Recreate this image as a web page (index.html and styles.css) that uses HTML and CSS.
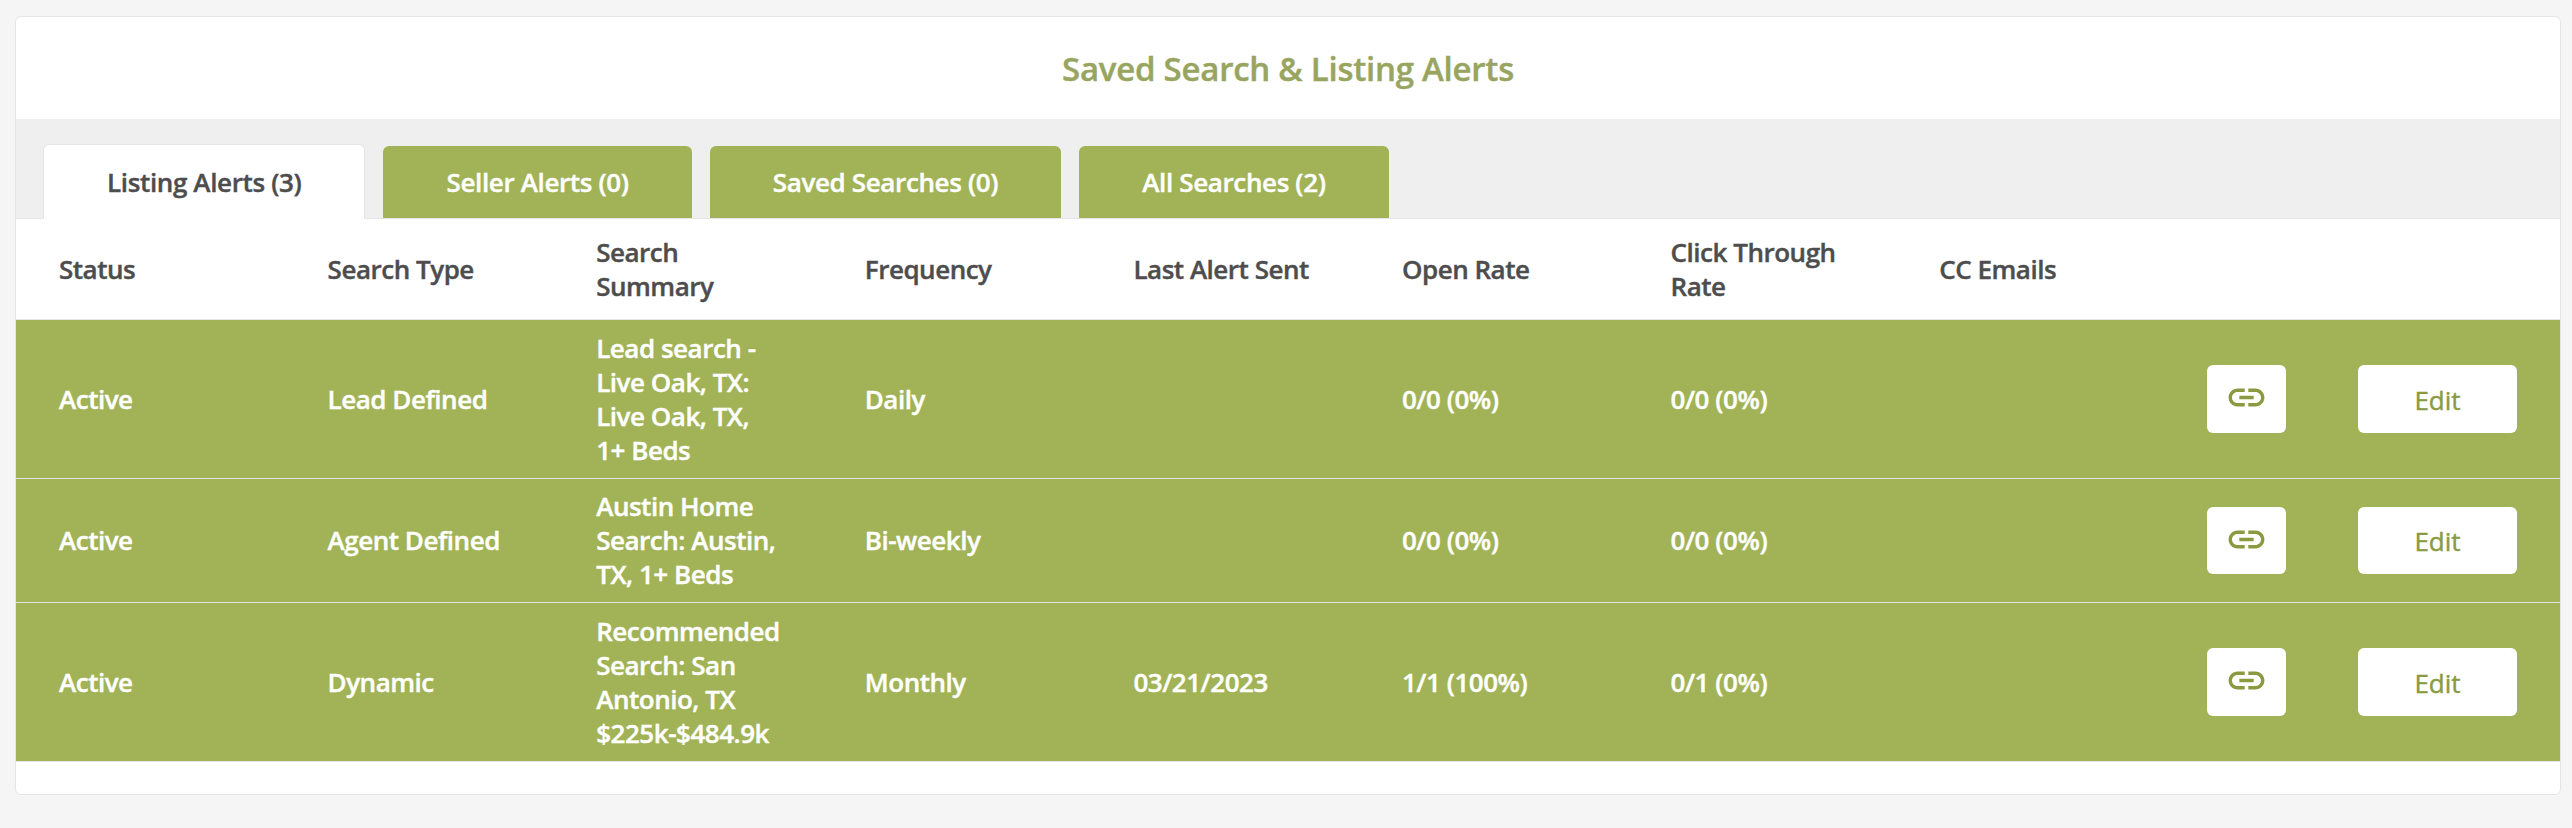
FILE: index.html
```html
<!DOCTYPE html>
<html lang="en">
<head>
    <title>Saved Search &amp; Listing Alerts</title>
    <meta charset="UTF-8">
    <link rel="stylesheet" href="styles.css">
</head>
<body>
    <!-- shared link icon -->
    <svg class="icon-defs" width="0" height="0">
        <symbol id="icon-link" viewBox="0 0 24 24">
            <path d="M3.9 12c0-1.71 1.39-3.1 3.1-3.1h4V7H7c-2.76 0-5 2.24-5 5s2.24 5 5 5h4v-1.9H7c-1.71 0-3.1-1.39-3.1-3.1zM8 13h8v-2H8v2zm9-6h-4v1.9h4c1.71 0 3.1 1.39 3.1 3.1s-1.39 3.1-3.1 3.1h-4V17h4c2.76 0 5-2.24 5-5s-2.24-5-5-5z"/>
        </symbol>
    </svg>

    <div class="card">
        <h2 class="card-title">Saved Search &amp; Listing Alerts</h2>

        <div class="tabs">
            <div class="tab active">Listing Alerts (3)</div>
            <div class="tab">Seller Alerts (0)</div>
            <div class="tab">Saved Searches (0)</div>
            <div class="tab">All Searches (2)</div>
        </div>

        <div class="row row-header">
            <div class="cell">Status</div>
            <div class="cell">Search Type</div>
            <div class="cell">Search Summary</div>
            <div class="cell">Frequency</div>
            <div class="cell">Last Alert Sent</div>
            <div class="cell">Open Rate</div>
            <div class="cell">Click Through Rate</div>
            <div class="cell">CC Emails</div>
            <div class="actions"></div>
        </div>

        <div class="row row-tall">
            <div class="cell">Active</div>
            <div class="cell">Lead Defined</div>
            <div class="cell">Lead search - Live Oak, TX: Live Oak, TX, 1+ Beds</div>
            <div class="cell">Daily</div>
            <div class="cell"></div>
            <div class="cell">0/0 (0%)</div>
            <div class="cell">0/0 (0%)</div>
            <div class="cell"></div>
            <div class="actions">
                <button class="btn btn-link"><svg class="icon"><use href="#icon-link"/></svg></button>
                <button class="btn btn-edit">Edit</button>
            </div>
        </div>

        <div class="row row-short">
            <div class="cell">Active</div>
            <div class="cell">Agent Defined</div>
            <div class="cell">Austin Home Search: Austin, TX, 1+ Beds</div>
            <div class="cell">Bi-weekly</div>
            <div class="cell"></div>
            <div class="cell">0/0 (0%)</div>
            <div class="cell">0/0 (0%)</div>
            <div class="cell"></div>
            <div class="actions">
                <button class="btn btn-link"><svg class="icon"><use href="#icon-link"/></svg></button>
                <button class="btn btn-edit">Edit</button>
            </div>
        </div>

        <div class="row row-tall">
            <div class="cell">Active</div>
            <div class="cell">Dynamic</div>
            <div class="cell">Recommended Search: San Antonio, TX $225k-$484.9k</div>
            <div class="cell">Monthly</div>
            <div class="cell">03/21/2023</div>
            <div class="cell">1/1 (100%)</div>
            <div class="cell">0/1 (0%)</div>
            <div class="cell"></div>
            <div class="actions">
                <button class="btn btn-link"><svg class="icon"><use href="#icon-link"/></svg></button>
                <button class="btn btn-edit">Edit</button>
            </div>
        </div>
    </div>
</body>
</html>
```

FILE: styles.css
```css
* {
    box-sizing: border-box;
}

body {
    margin: 0;
    padding: 16px 11px 0 15px;
    background: #f5f5f5;
    color: #4d4d4d;
    font-family: "Open Sans", sans-serif;
    font-size: 26px;
    font-weight: 600;
    letter-spacing: -0.48px;
    line-height: 34px;
    -webkit-text-stroke: 0.4px;
}

.icon-defs {
    display: none;
}

.card {
    height: 779px;
    background: #fff;
    border: 1px solid #e5e5e5;
    border-radius: 6px;
    overflow: hidden;
}

.card-title {
    margin: 0;
    height: 102px;
    padding-top: 1px;
    line-height: 102px;
    font-size: 33px;
    font-weight: 600;
    letter-spacing: -0.25px;
    text-align: center;
    color: #98a560;
}

/* tabs */
.tabs {
    display: flex;
    align-items: flex-end;
    gap: 18px;
    height: 100px;
    padding-left: 27px;
    background: #efefef;
    border-bottom: 1px solid #e5e5e5;
}

.tab {
    height: 72px;
    padding: 0 63px;
    line-height: 72px;
    letter-spacing: -0.36px;
    background: #a2b357;
    color: #fff;
    border-radius: 6px 6px 0 0;
}

.tab.active {
    height: 75px;
    margin-bottom: -1px;
    line-height: 74px;
    background: #fff;
    color: #4d4d4d;
    border: 1px solid #e5e5e5;
    border-bottom: none;
}

/* table rows */
.row {
    display: grid;
    grid-template-columns: repeat(8, 268.6px) 1fr;
    align-items: center;
    background: #a2b357;
    color: #fff;
    border-bottom: 1px solid #e5e5e5;
}

.row-tall {
    height: 159px;
}

.row-short {
    height: 124px;
}

.row-header {
    height: 101px;
    background: #fff;
    color: #4d4d4d;
}

.cell {
    padding: 0 40px 0 43px;
}

.row-short .cell {
    padding-bottom: 1px;
}

.actions {
    display: flex;
    justify-content: flex-end;
    gap: 72px;
    padding-right: 43px;
}

.btn {
    display: flex;
    align-items: center;
    justify-content: center;
    height: 68px;
    padding: 0;
    border: none;
    border-radius: 6px;
    background: #fff;
    color: #8a9a41;
    font-family: inherit;
    font-size: 26px;
    font-weight: 400;
}

.row-short .btn {
    height: 67px;
}

.btn-link {
    width: 79px;
}

.btn-edit {
    width: 159px;
    padding-top: 1px;
}

.icon {
    width: 43px;
    height: 43px;
    margin-bottom: 3px;
    fill: currentColor;
}
```
